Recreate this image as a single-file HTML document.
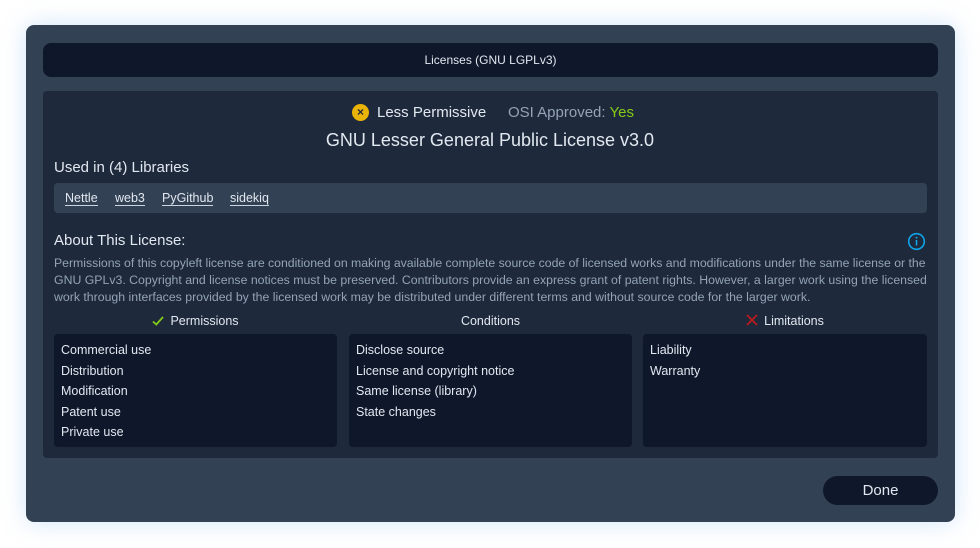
<!DOCTYPE html>
<html><head><style>
*{margin:0;padding:0;box-sizing:border-box}
body{width:980px;height:548px;background:#fff;font-family:"Liberation Sans",sans-serif;position:relative;overflow:hidden;color:#e2e8f0}
.a{position:absolute}
.dlg{left:26px;top:25px;width:929px;height:497px;background:#334155;border-radius:8px;box-shadow:0 0 24px rgba(120,180,240,.35)}
.hdr{left:43px;top:43px;width:895px;height:34px;background:#0f172a;border-radius:8px;font-size:12px;text-align:center;line-height:34px}
.pnl{left:43px;top:91px;width:895px;height:367px;background:#1e293b;border-radius:4px}
.libs{left:54px;top:183px;width:873px;height:30px;background:#334155;border-radius:4px;font-size:12.5px}
.libs span{position:absolute;top:8px;border-bottom:1px solid #cbd5e1;line-height:14px}
.p{left:54px;font-size:12.3px;color:#94a3b8;white-space:nowrap;line-height:17px}
.box{top:334px;height:113px;background:#0f172a;border-radius:4px;font-size:12.5px;padding:6px 7px;line-height:20.5px}
.col{top:314px;font-size:12.5px;text-align:center}
.col svg{vertical-align:-1px;margin-right:6px}
</style></head><body>
<div class="a dlg"></div>
<div class="a hdr">Licenses (GNU LGPLv3)</div>
<div class="a pnl"></div>
<div class="a" style="left:352px;top:104px;width:17px;height:17px;border-radius:50%;background:#eab308;color:#1e293b;font-size:12px;font-weight:bold;text-align:center;line-height:17px">×</div>
<div class="a" style="left:377px;top:104px;font-size:15px">Less Permissive</div>
<div class="a" style="left:508px;top:104px;font-size:15px;color:#94a3b8">OSI Approved: <span style="color:#84cc16">Yes</span></div>
<div class="a" style="left:0;width:980px;text-align:center;top:130px;font-size:18px">GNU Lesser General Public License v3.0</div>
<div class="a" style="left:54px;top:159px;font-size:15px">Used in (4) Libraries</div>
<div class="a libs"><span style="left:11px">Nettle</span><span style="left:61px">web3</span><span style="left:108px">PyGithub</span><span style="left:176px">sidekiq</span></div>
<div class="a" style="left:54px;top:232px;font-size:15px">About This License:</div>
<svg class="a" style="left:907px;top:232px" width="19" height="19" viewBox="0 0 19 19"><circle cx="9.5" cy="9.5" r="7.8" fill="none" stroke="#0ea5e9" stroke-width="1.6"/><rect x="8.7" y="8" width="1.6" height="5.5" fill="#0ea5e9"/><circle cx="9.5" cy="5.6" r="1" fill="#0ea5e9"/></svg>
<div class="a p" style="top:255px;letter-spacing:-0.03px">Permissions of this copyleft license are conditioned on making available complete source code of licensed works and modifications under the same license or the</div>
<div class="a p" style="top:272px">GNU GPLv3. Copyright and license notices must be preserved. Contributors provide an express grant of patent rights. However, a larger work using the licensed</div>
<div class="a p" style="top:289px">work through interfaces provided by the licensed work may be distributed under different terms and without source code for the larger work.</div>
<div class="a col" style="left:54px;width:283px"><svg width="12" height="10" viewBox="0 0 12 10"><path d="M1 5.5L4.3 8.5L11 1" fill="none" stroke="#84cc16" stroke-width="1.8"/></svg>Permissions</div>
<div class="a col" style="left:349px;width:283px">Conditions</div>
<div class="a col" style="left:643px;width:284px"><svg width="12" height="12" viewBox="0 0 12 12"><path d="M1 1L11 11M11 1L1 11" fill="none" stroke="#b91c1c" stroke-width="1.8"/></svg>Limitations</div>
<div class="a box" style="left:54px;width:283px">Commercial use<br>Distribution<br>Modification<br>Patent use<br>Private use</div>
<div class="a box" style="left:349px;width:283px">Disclose source<br>License and copyright notice<br>Same license (library)<br>State changes</div>
<div class="a box" style="left:643px;width:284px">Liability<br>Warranty</div>
<div class="a" style="left:823px;top:476px;width:115px;height:29px;background:#0f172a;border-radius:15px;text-align:center;line-height:30px;font-size:15px">Done</div>
</body></html>
